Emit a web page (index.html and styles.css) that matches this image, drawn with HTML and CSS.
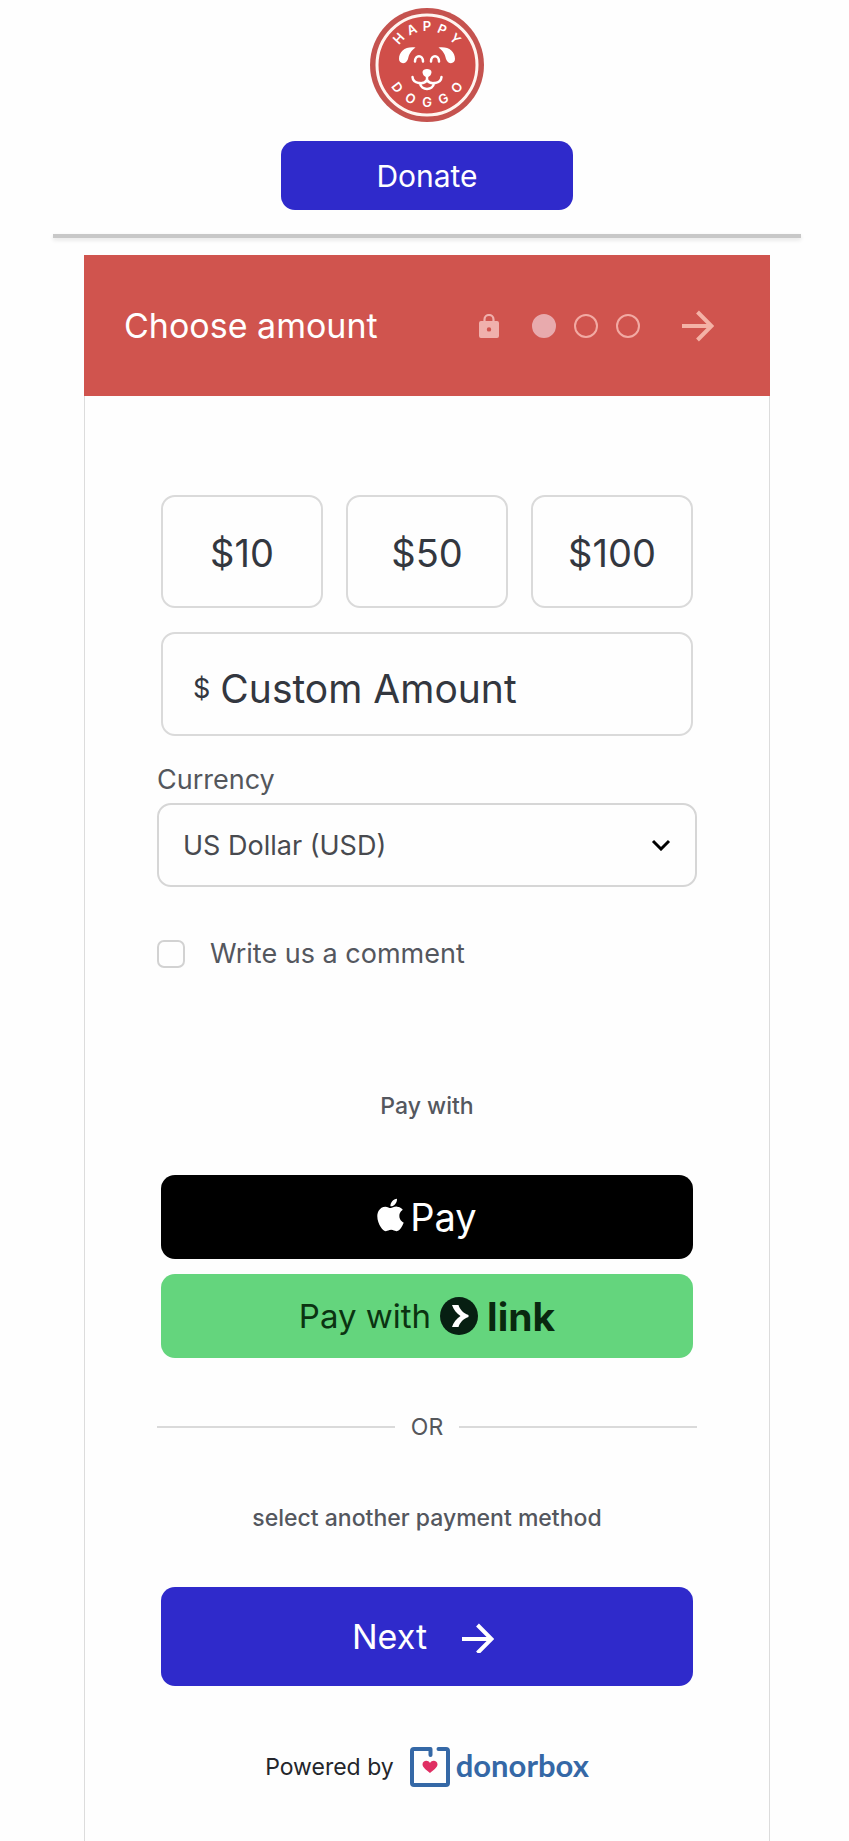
FILE: index.html
```html
<!DOCTYPE html>
<html lang="en">
<head>
<meta charset="utf-8">
<meta name="viewport" content="width=device-width, initial-scale=1">
<title>Happy Doggo – Donate</title>
<link rel="stylesheet" href="styles.css">
</head>
<body>
<header class="site-header">
  <svg class="brand" viewBox="0 0 114 114" role="img" aria-label="Happy Doggo">
    <circle cx="57" cy="57" r="57" fill="#c5534f"/>
    <circle cx="57" cy="57" r="50" fill="#d04e49" stroke="#fff5f0" stroke-width="3"/>
    <g class="brand-letters">
      <text x="57" y="23" transform="rotate(-47 57 57)">H</text>
      <text x="57" y="23" transform="rotate(-23 57 57)">A</text>
      <text x="57" y="23">P</text>
      <text x="57" y="23" transform="rotate(23 57 57)">P</text>
      <text x="57" y="23" transform="rotate(47 57 57)">Y</text>
      <text x="57" y="99" transform="rotate(53 57 57)">D</text>
      <text x="57" y="99" transform="rotate(26 57 57)">O</text>
      <text x="57" y="99">G</text>
      <text x="57" y="99" transform="rotate(-26 57 57)">G</text>
      <text x="57" y="99" transform="rotate(-53 57 57)">O</text>
    </g>
    <g fill="#fff">
      <path d="M45.500 39.500C36 38 29 43 29 51C29 56 36 57 38 51C39 46 41 43 45.500 39.500Z"/>
      <path d="M68.500 39.500C78 38 85 43 85 51C85 56 78 57 76 51C75 46 73 43 68.500 39.500Z"/>
      <path d="M52.500 64C52.500 60 61.500 60 61.500 64C61.500 67 59 69 57 69S52.500 67 52.500 64Z"/>
    </g>
    <g fill="none" stroke="#fff" stroke-width="2.500" stroke-linecap="round">
      <path d="M45 53.500C45 46.500 53 46.500 53 53.500M61 53.500C61 46.500 69 46.500 69 53.500"/>
      <path d="M57 68V72M42.500 69C43 76 54 77 57 72C60 77 71 76 71.500 69M50 75C51 83 63 83 64 75"/>
    </g>
  </svg>
  <button class="donate" type="button">Donate</button>
</header>
<hr class="divider">
<main class="card">
  <div class="steps">
    <h1 class="steps-title">Choose amount</h1>
    <svg class="lock" viewBox="0 0 20 24" aria-hidden="true">
      <path d="M5.500 9V5.500a4.500 4.500 0 0 1 9 0V9" fill="none" stroke="currentColor" stroke-width="2.200"/>
      <path fill="currentColor" fill-rule="evenodd" d="M2 7h16a2 2 0 0 1 2 2v13a2 2 0 0 1-2 2H2a2 2 0 0 1-2-2V9a2 2 0 0 1 2-2Zm8 6.200a2.200 2.200 0 1 0 0 4.400a2.200 2.200 0 0 0 0-4.400Z"/>
    </svg>
    <div class="dots"><span class="dot dot-on"></span><span class="dot"></span><span class="dot"></span></div>
    <button class="steps-next" type="button" aria-label="Next step">
      <svg class="arrow" viewBox="0 0 32 32" aria-hidden="true"><path d="M0 16H29M15.500 2L29.500 16L15.500 30"/></svg>
    </button>
  </div>
  <form class="form">
    <div class="amounts">
      <button class="amount" type="button">$10</button>
      <button class="amount" type="button">$50</button>
      <button class="amount" type="button">$100</button>
    </div>
    <label class="custom"><span class="custom-sign">$</span><input class="custom-input" type="text" placeholder="Custom Amount" aria-label="Custom Amount"></label>
    <label class="label" for="currency">Currency</label>
    <div class="select-wrap">
      <select class="select" id="currency"><option>US Dollar (USD)</option></select>
      <svg class="chevron" viewBox="0 0 20 12" aria-hidden="true"><path d="M2 2L10 10L18 2"/></svg>
    </div>
    <label class="comment"><input class="check" type="checkbox">Write us a comment</label>
    <p class="note">Pay with</p>
    <div class="wallets">
      <button class="wallet apple" type="button" aria-label="Apple Pay">
        <svg class="apple-icon" viewBox="2 0 20 24" aria-hidden="true"><path fill="currentColor" d="M12.152 6.896c-.948 0-2.415-1.078-3.960-1.040-2.040.027-3.910 1.183-4.961 3.014-2.117 3.675-.546 9.103 1.519 12.090 1.013 1.454 2.208 3.090 3.792 3.039 1.520-.065 2.090-.987 3.935-.987 1.831 0 2.350.987 3.960.948 1.637-.026 2.676-1.480 3.676-2.948 1.156-1.688 1.636-3.325 1.662-3.415-.039-.013-3.182-1.221-3.220-4.857-.026-3.040 2.480-4.494 2.597-4.559-1.429-2.090-3.623-2.324-4.390-2.376-2-.156-3.675 1.090-4.610 1.090zM15.530 3.830c.843-1.012 1.400-2.427 1.245-3.830-1.207.052-2.662.805-3.532 1.818-.780.896-1.454 2.338-1.273 3.714 1.338.104 2.715-.688 3.559-1.701"/></svg>
        <span>Pay</span>
      </button>
      <button class="wallet link" type="button">
        <span>Pay with</span>
        <svg class="link-icon" viewBox="0 0 38 38" aria-hidden="true"><circle cx="19" cy="19" r="19" fill="#071f12"/><path fill="#fff" d="M12 8H18.500C20 12.500 23 16 28.500 18V20C23 22 20 25.500 18.500 30H12C13.500 25.500 16.500 21.500 20.500 19C16.500 16.500 13.500 12.500 12 8Z"/></svg>
        <span class="link-word">link</span>
      </button>
    </div>
    <div class="or">OR</div>
    <p class="note method">select another payment method</p>
    <button class="next" type="submit">Next
      <svg class="arrow" viewBox="0 0 32 32" aria-hidden="true"><path d="M0 18H29M15.500 4L29.500 18L15.500 32"/></svg>
    </button>
  </form>
  <footer class="powered">
    <span>Powered by</span>
    <a class="donorbox" href="#">
      <svg class="box-icon" viewBox="0 0 40 40" aria-hidden="true">
        <path d="M20.500 8V2H4Q2 2 2 4V36Q2 38 4 38H36Q38 38 38 36V4Q38 2 36 2H28.500" fill="none" stroke="#3568a6" stroke-width="4" stroke-linecap="round" stroke-linejoin="round"/>
        <path d="M20 26C17 23.500 12.500 20.500 12.500 17.500C12.500 13.500 18 12.500 20 16C22 12.500 27.500 13.500 27.500 17.500C27.500 20.500 23 23.500 20 26Z" fill="#e02f63"/>
      </svg>
      <span class="donorbox-word">donorbox</span>
    </a>
  </footer>
</main>
</body>
</html>
```
FILE: styles.css
```css
* { box-sizing: border-box; }
body {
  margin: 0;
  padding-left: 5px;
  min-height: 100vh;
  display: flex;
  flex-direction: column;
  background: #fefefe;
  color: #33373f;
  font-family: Inter, "Liberation Sans", sans-serif;
}
button, input, select { font: inherit; color: inherit; }
button { margin: 0; padding: 0; border: 0; cursor: pointer; }
h1, p { margin: 0; font-weight: 400; }

.site-header {
  display: flex;
  flex-direction: column;
  align-items: center;
  gap: 19px;
  padding: 8px 0 24px;
}
.brand { width: 114px; height: 114px; }
.brand-letters {
  fill: #fff;
  font-size: 13px;
  font-weight: 600;
  text-anchor: middle;
}
.donate {
  width: 292px;
  height: 69px;
  border-radius: 14px;
  background: #2f2acb;
  color: #fff;
  font-size: 30px;
}
.divider {
  width: auto;
  height: 4px;
  margin: 0 48px 17px;
  border: 0;
  background: #c8c8c8;
  box-shadow: 0 2px 4px #e4e4e4;
}

.card {
  flex: 1;
  margin: 0 79px;
  border: 1px solid #dcdcdc;
  border-width: 0 1px;
}
.steps {
  display: flex;
  align-items: center;
  height: 141px;
  margin: 0 -1px;
  padding: 0 56px 0 40px;
  background: #d0544e;
  color: #f0b0ac;
}
.steps-title {
  flex: 1;
  color: #fff;
  font-size: 34px;
}
.lock { width: 20px; height: 24px; margin-right: 33px; }
.dots { display: flex; gap: 18px; margin-right: 42px; }
.dot {
  width: 24px;
  height: 24px;
  border: 2px solid #f2aaa3;
  border-radius: 50%;
}
.dot-on { background: #e8aaad; border-color: #e8aaad; }
.steps-next { display: flex; background: none; color: #f4b2a6; }
.arrow {
  width: 32px;
  height: 32px;
  fill: none;
  stroke: currentColor;
  stroke-width: 4;
}

.form {
  display: flex;
  flex-direction: column;
  padding: 99px 72px 0;
}
.amounts {
  display: grid;
  grid-template-columns: repeat(3, 1fr);
  gap: 23px;
  margin: 0 4px;
}
.amount {
  height: 113px;
  padding-top: 2px;
  border: 2px solid #dadada;
  border-radius: 14px;
  background: #fefefe;
  font-size: 38px;
}
.custom {
  display: flex;
  align-items: center;
  gap: 10px;
  height: 104px;
  margin: 24px 4px 28px;
  padding: 8px 30px 0;
  border: 2px solid #dadada;
  border-radius: 14px;
}
.custom-sign { font-size: 27px; }
.custom-input {
  flex: 1;
  min-width: 0;
  padding: 0;
  border: 0;
  outline: 0;
  background: none;
  font-size: 39px;
}
.custom-input::placeholder { color: inherit; opacity: 1; }
.label {
  color: #54575c;
  font-size: 27px;
  line-height: 32px;
}
.select-wrap { display: grid; align-items: center; margin-top: 7px; }
.select {
  grid-area: 1 / 1;
  appearance: none;
  height: 84px;
  padding: 0 24px;
  border: 2px solid #d6d6d6;
  border-radius: 14px;
  background: #fefefe;
  color: #484a4f;
  font-size: 27px;
}
.chevron {
  grid-area: 1 / 1;
  justify-self: end;
  width: 20px;
  height: 12px;
  margin-right: 26px;
  fill: none;
  stroke: #000;
  stroke-width: 3;
  pointer-events: none;
}
.comment {
  display: flex;
  align-items: center;
  gap: 25px;
  margin-top: 51px;
  color: #54575e;
  font-size: 27px;
  line-height: 32px;
}
.check {
  appearance: none;
  width: 28px;
  height: 28px;
  margin: 0;
  border: 2px solid #d2d2d2;
  border-radius: 7px;
}
.note {
  margin-top: 122px;
  color: #54575e;
  font-size: 23px;
  font-weight: 500;
  line-height: 28px;
  text-align: center;
}
.wallets {
  display: grid;
  gap: 15px;
  margin: 55px 4px 0;
}
.wallet {
  display: flex;
  align-items: center;
  justify-content: center;
  height: 84px;
  border-radius: 14px;
}
.apple { gap: 6px; background: #000; color: #fff; font-size: 38px; font-weight: 400; }
.apple-icon { width: 27px; height: 34px; margin-bottom: 4px; }
.link { gap: 9px; background: #64d57d; color: #0b3311; font-size: 33px; }
.link-icon { width: 38px; height: 38px; }
.link-word { color: #09280f; font-size: 39px; font-weight: 700; }
.or {
  display: flex;
  align-items: center;
  gap: 16px;
  margin-top: 55px;
  color: #55575b;
  font-size: 23px;
  line-height: 28px;
}
.or::before, .or::after {
  content: "";
  flex: 1;
  height: 2px;
  background: #dadada;
}
.method { margin-top: 63px; }
.next {
  display: flex;
  align-items: center;
  justify-content: center;
  gap: 35px;
  height: 99px;
  margin: 55px 4px 0;
  padding-right: 8px;
  border-radius: 14px;
  background: #2f2acb;
  color: #fff;
  font-size: 34px;
}
.powered {
  display: flex;
  align-items: center;
  justify-content: center;
  gap: 16px;
  padding: 61px 0 40px;
  color: #24262b;
  font-size: 23px;
}
.donorbox {
  display: flex;
  align-items: center;
  gap: 6px;
  color: #3568a6;
  font-family: Lato, Inter, sans-serif;
  font-size: 31px;
  font-weight: 700;
  line-height: 36px;
  text-decoration: none;
}
.donorbox-word { padding-bottom: 4px; }
.box-icon { width: 40px; height: 40px; }
```
